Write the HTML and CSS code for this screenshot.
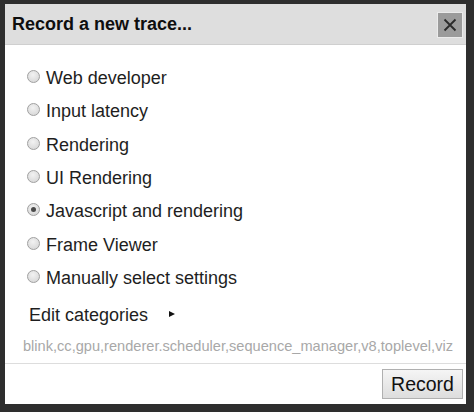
FILE: index.html
```html
<!DOCTYPE html>
<html>
<head>
<meta charset="utf-8">
<link rel="stylesheet" href="styles.css">
</head>
<body>
<div class="dialog">
  <div class="header">
    <span class="title">Record a new trace...</span>
    <button class="close" aria-label="Close">
      <svg width="14" height="14" viewBox="0 0 14 14"><path d="M1.5 1.5 L12.5 12.5 M12.5 1.5 L1.5 12.5" stroke="#2a2a2a" stroke-width="1.8" fill="none"/></svg>
    </button>
  </div>
  <div class="content">
    <div class="options">
      <label class="option"><span class="radio"></span>Web developer</label>
      <label class="option"><span class="radio"></span>Input latency</label>
      <label class="option"><span class="radio"></span>Rendering</label>
      <label class="option"><span class="radio"></span>UI Rendering</label>
      <label class="option"><span class="radio checked"></span>Javascript and rendering</label>
      <label class="option"><span class="radio"></span>Frame Viewer</label>
      <label class="option"><span class="radio"></span>Manually select settings</label>
    </div>
    <div class="edit">Edit categories<span class="arrow"></span></div>
    <div class="cats">blink,cc,gpu,renderer.scheduler,sequence_manager,v8,toplevel,viz</div>
  </div>
  <div class="footer">
    <button class="record">Record</button>
  </div>
</div>
</body>
</html>
```
FILE: styles.css
```css
html, body {
  margin: 0;
  padding: 0;
}
body {
  background: #2e2e2e;
  font-family: "Liberation Sans", Arial, sans-serif;
  color: #1e1e1e;
  width: 474px;
  height: 412px;
  overflow: hidden;
}
.dialog {
  margin: 4px 8px 8px 5px;
  height: 400px;
  background: #ffffff;
  display: flex;
  flex-direction: column;
}
.header {
  height: 40px;
  flex: none;
  background: #dedede;
  border-bottom: 1px solid #cfcfcf;
  display: flex;
  align-items: center;
  justify-content: space-between;
  padding: 0 3px 0 7px;
}
.title {
  font-weight: bold;
  font-size: 18px;
  color: #0e0e0e;
  margin-top: 1px;
}
.close {
  width: 26px;
  height: 26px;
  margin-top: 1px;
  padding: 0;
  border: 1px solid #ebebeb;
  background: #9b9b9b;
  display: flex;
  align-items: center;
  justify-content: center;
}
.content {
  flex: 1;
  padding: 17px 0 0 18px;
}
.options {
  margin-left: 4px;
}
.option {
  display: block;
  height: 33.33px;
  line-height: 33.33px;
  font-size: 18px;
  white-space: nowrap;
}
.radio {
  display: inline-block;
  width: 11px;
  height: 11px;
  border: 1px solid #a0a0a0;
  border-radius: 50%;
  background: radial-gradient(circle at 45% 35%, #f2f2f2 0%, #d2d2d2 100%);
  margin-right: 6px;
  vertical-align: 1px;
  box-sizing: content-box;
  position: relative;
}
.radio.checked::after {
  content: "";
  position: absolute;
  left: 3px;
  top: 3px;
  width: 5px;
  height: 5px;
  border-radius: 50%;
  background: #4a4a4a;
}
.edit {
  margin: 9.5px 0 0 6px;
  font-size: 18px;
  white-space: nowrap;
}
.arrow {
  display: inline-block;
  width: 0;
  height: 0;
  border-left: 6px solid #111;
  border-top: 3.5px solid transparent;
  border-bottom: 3.5px solid transparent;
  margin-left: 21px;
  vertical-align: 4px;
}
.cats {
  margin-top: 12px;
  font-size: 14.6px;
  color: #a8a8a8;
  white-space: nowrap;
}
.footer {
  flex: none;
  border-top: 1px solid #dddddd;
  padding: 5px 3px 5px 0;
  display: flex;
  justify-content: flex-end;
}
.record {
  width: 81px;
  height: 30px;
  padding: 0;
  border: 1px solid #b0b0b0;
  background: linear-gradient(#f5f5f5, #dddddd);
  font-family: "Liberation Sans", Arial, sans-serif;
  font-size: 19.5px;
  color: #111;
}
```
